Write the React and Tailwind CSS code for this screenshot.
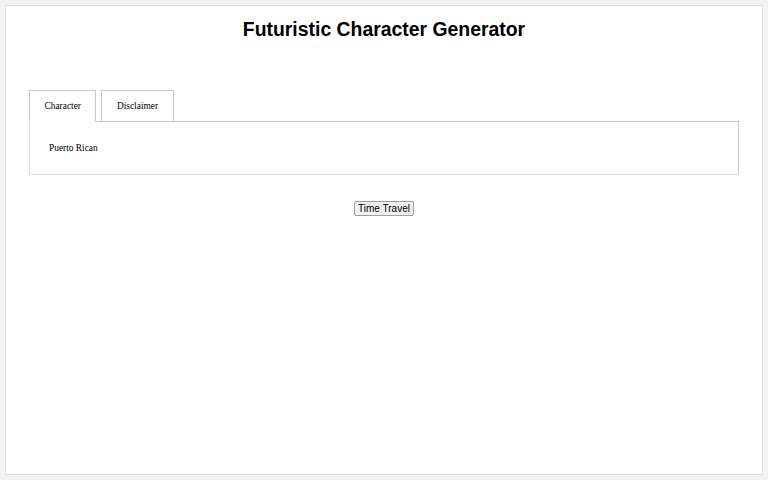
import React, { useState } from 'react';

export default function App() {
  const [tab, setTab] = useState('character');

  const tabs = [
    { id: 'character', label: 'Character' },
    { id: 'disclaimer', label: 'Disclaimer' },
  ];

  return (
    <div className="w-[768px] h-[480px] bg-[#f2f2f2] p-[5px]" style={{ fontFamily: '"Liberation Sans", Arial, sans-serif' }}>
      <div className="h-[470px] bg-white border border-[#e0e0e0] px-[23px] pt-[11px]">
        <h1 className="text-[19.4px] leading-[24px] font-bold text-black text-center">Futuristic Character Generator</h1>

        {/* Tabs */}
        <div className="mt-[49px]">
          <div className="flex gap-[5px] font-['Liberation_Serif',serif] text-[9.4px] text-black">
            {tabs.map((t) => {
              const active = tab === t.id;
              return (
                <button
                  key={t.id}
                  onClick={() => setTab(t.id)}
                  className={`h-[32px] px-[14.5px] border border-[#c8c8c8] bg-white relative -mb-px ${
                    active ? 'border-b-white z-10' : 'border-b-[#c8c8c8]'
                  }`}
                >
                  {t.label}
                </button>
              );
            })}
          </div>
          <div className="h-[54px] border border-[#c8c8c8] border-l-[#dcdcdc] border-r-[#c8c8c8] border-b-[#dcdcdc] px-[19px] pt-[20px] font-['Liberation_Serif',serif] text-[9.4px] leading-[12px] text-black">
            {tab === 'character' ? 'Puerto Rican' : 'For entertainment only.'}
          </div>
        </div>

        <div className="flex justify-center mt-[26px]">
          <button className="h-[15px] px-[3.5px] text-[10px] leading-[10px] text-black bg-[#f0f0f0] border border-[#a0a0a0] rounded-[2px]">
            Time Travel
          </button>
        </div>
      </div>
    </div>
  );
}
